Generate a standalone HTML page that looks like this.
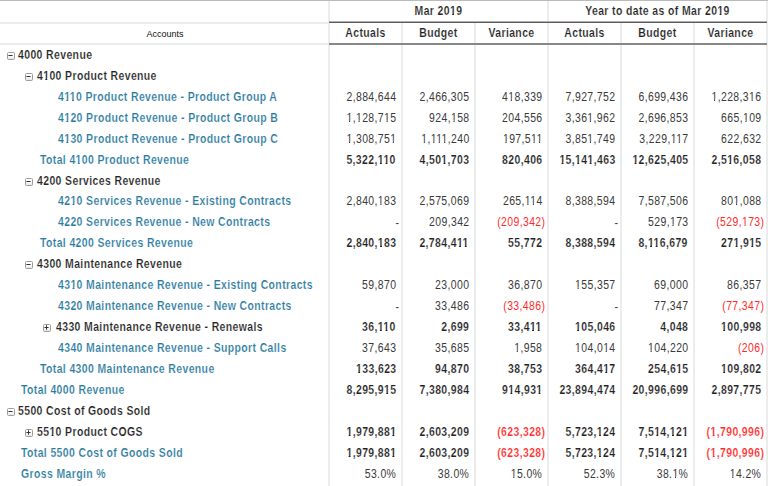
<!DOCTYPE html>
<html><head><meta charset="utf-8"><style>
html,body{margin:0;padding:0;background:#fff;width:768px;height:486px;overflow:hidden;position:relative;}
body{font-family:"Liberation Sans",sans-serif;font-size:12px;color:#222;}
.t{position:absolute;white-space:nowrap;line-height:21px;height:21px;font-size:12px;letter-spacing:0.45px;}
.a{transform:scaleX(0.87);transform-origin:0 0;}
.c{transform:scaleX(0.87);transform-origin:50% 0;text-align:center;}
.n{transform:scaleX(0.87);transform-origin:100% 0;text-align:right;}
.b{font-weight:bold;-webkit-text-stroke:0.18px #fff;}
.o{clip-path:polygon(0 0,100% 0,100% 9.6px,4.2px 9.6px,4.2px 100%,2.9px 100%,2.9px 9.6px,0 9.6px);}
.b .o{clip-path:polygon(0 0,100% 0,100% 9px,4.7px 9px,4.7px 100%,2.5px 100%,2.5px 9px,0 9px);}
.l{position:absolute;}
.ic{position:absolute;}
</style></head><body>

<svg width="0" height="0" style="position:absolute"><defs><linearGradient id="g" x1="0" y1="0" x2="0" y2="1"><stop offset="0" stop-color="#fff"/><stop offset="0.45" stop-color="#fff"/><stop offset="1" stop-color="#e2e2e2"/></linearGradient></defs></svg>
<div class="l" style="left:0;top:0;width:768px;height:1px;background:#bbbbbb"></div>
<div class="l" style="left:0;top:22px;width:328px;height:2px;background:#ebedec"></div>
<div class="l" style="left:0;top:43px;width:328px;height:2px;background:#ebedec"></div>
<div class="l" style="left:328px;top:1px;width:2px;height:485px;background:#ebedec"></div>
<div class="l" style="left:401px;top:23px;width:2px;height:463px;background:#ebedec"></div>
<div class="l" style="left:474px;top:23px;width:2px;height:463px;background:#ebedec"></div>
<div class="l" style="left:547px;top:1px;width:2px;height:485px;background:#ebedec"></div>
<div class="l" style="left:620px;top:23px;width:2px;height:463px;background:#ebedec"></div>
<div class="l" style="left:693px;top:23px;width:2px;height:463px;background:#ebedec"></div>
<div class="l" style="left:766px;top:1px;width:2px;height:485px;background:#ebedec"></div>
<div class="l" style="left:329px;top:21px;width:438px;height:1px;background:#b0b0b0"></div>
<div class="l" style="left:329px;top:22px;width:438px;height:1px;background:#5e5c5a"></div>
<div class="l" style="left:329px;top:43px;width:438px;height:2px;background:#898787"></div>
<div class="t c b" style="left:330px;top:1px;width:217px">Mar 20<span class="o">1</span>9</div>
<div class="t c b" style="left:549px;top:1px;width:217px">Year to date as of Mar 20<span class="o">1</span>9</div>
<div class="t" style="left:1px;top:24px;width:328px;font-size:9px;line-height:21px;text-align:center;letter-spacing:0;color:#111">Accounts</div>
<div class="t c b" style="left:330px;top:23px;width:71px">Actuals</div>
<div class="t c b" style="left:403px;top:23px;width:71px">Budget</div>
<div class="t c b" style="left:476px;top:23px;width:71px">Variance</div>
<div class="t c b" style="left:549px;top:23px;width:71px">Actuals</div>
<div class="t c b" style="left:622px;top:23px;width:71px">Budget</div>
<div class="t c b" style="left:695px;top:23px;width:71px">Variance</div>
<svg class="ic" style="left:7px;top:52px" width="8" height="8" viewBox="0 0 8 8"><rect x="0.5" y="0.5" width="7" height="7" rx="1" fill="url(#g)" stroke="#9c9c9c"/><path d="M1.4 3.5H5.6" stroke="#333" stroke-width="1"/></svg>
<div class="t a b" style="left:18px;top:45px;color:#222">4000 Revenue</div>
<svg class="ic" style="left:25px;top:73px" width="8" height="8" viewBox="0 0 8 8"><rect x="0.5" y="0.5" width="7" height="7" rx="1" fill="url(#g)" stroke="#9c9c9c"/><path d="M1.4 3.5H5.6" stroke="#333" stroke-width="1"/></svg>
<div class="t a b" style="left:37px;top:66px;color:#222">4<span class="o">1</span>00 Product Revenue</div>
<div class="t a b" style="left:58px;top:87px;color:#2a7a9e">4<span class="o">1</span><span class="o">1</span>0 Product Revenue - Product Group A</div>
<div class="t n" style="right:371.8px;top:87px;color:#3a3a3a">2,884,644</div>
<div class="t n" style="right:298.8px;top:87px;color:#3a3a3a">2,466,305</div>
<div class="t n" style="right:225.8px;top:87px;color:#3a3a3a">4<span class="o">1</span>8,339</div>
<div class="t n" style="right:152.8px;top:87px;color:#3a3a3a">7,927,752</div>
<div class="t n" style="right:79.8px;top:87px;color:#3a3a3a">6,699,436</div>
<div class="t n" style="right:6.8px;top:87px;color:#3a3a3a"><span class="o">1</span>,228,3<span class="o">1</span>6</div>
<div class="t a b" style="left:58px;top:108px;color:#2a7a9e">4<span class="o">1</span>20 Product Revenue - Product Group B</div>
<div class="t n" style="right:371.8px;top:108px;color:#3a3a3a"><span class="o">1</span>,<span class="o">1</span>28,7<span class="o">1</span>5</div>
<div class="t n" style="right:298.8px;top:108px;color:#3a3a3a">924,<span class="o">1</span>58</div>
<div class="t n" style="right:225.8px;top:108px;color:#3a3a3a">204,556</div>
<div class="t n" style="right:152.8px;top:108px;color:#3a3a3a">3,36<span class="o">1</span>,962</div>
<div class="t n" style="right:79.8px;top:108px;color:#3a3a3a">2,696,853</div>
<div class="t n" style="right:6.8px;top:108px;color:#3a3a3a">665,<span class="o">1</span>09</div>
<div class="t a b" style="left:58px;top:129px;color:#2a7a9e">4<span class="o">1</span>30 Product Revenue - Product Group C</div>
<div class="t n" style="right:371.8px;top:129px;color:#3a3a3a"><span class="o">1</span>,308,75<span class="o">1</span></div>
<div class="t n" style="right:298.8px;top:129px;color:#3a3a3a"><span class="o">1</span>,<span class="o">1</span><span class="o">1</span><span class="o">1</span>,240</div>
<div class="t n" style="right:225.8px;top:129px;color:#3a3a3a"><span class="o">1</span>97,5<span class="o">1</span><span class="o">1</span></div>
<div class="t n" style="right:152.8px;top:129px;color:#3a3a3a">3,85<span class="o">1</span>,749</div>
<div class="t n" style="right:79.8px;top:129px;color:#3a3a3a">3,229,<span class="o">1</span><span class="o">1</span>7</div>
<div class="t n" style="right:6.8px;top:129px;color:#3a3a3a">622,632</div>
<div class="t a b" style="left:40px;top:150px;color:#2a7a9e">Total 4<span class="o">1</span>00 Product Revenue</div>
<div class="t n b" style="right:371.8px;top:150px;color:#222">5,322,<span class="o">1</span><span class="o">1</span>0</div>
<div class="t n b" style="right:298.8px;top:150px;color:#222">4,50<span class="o">1</span>,703</div>
<div class="t n b" style="right:225.8px;top:150px;color:#222">820,406</div>
<div class="t n b" style="right:152.8px;top:150px;color:#222"><span class="o">1</span>5,<span class="o">1</span>4<span class="o">1</span>,463</div>
<div class="t n b" style="right:79.8px;top:150px;color:#222"><span class="o">1</span>2,625,405</div>
<div class="t n b" style="right:6.8px;top:150px;color:#222">2,5<span class="o">1</span>6,058</div>
<svg class="ic" style="left:25px;top:178px" width="8" height="8" viewBox="0 0 8 8"><rect x="0.5" y="0.5" width="7" height="7" rx="1" fill="url(#g)" stroke="#9c9c9c"/><path d="M1.4 3.5H5.6" stroke="#333" stroke-width="1"/></svg>
<div class="t a b" style="left:37px;top:171px;color:#222">4200 Services Revenue</div>
<div class="t a b" style="left:58px;top:191px;color:#2a7a9e">42<span class="o">1</span>0 Services Revenue - Existing Contracts</div>
<div class="t n" style="right:371.8px;top:191px;color:#3a3a3a">2,840,<span class="o">1</span>83</div>
<div class="t n" style="right:298.8px;top:191px;color:#3a3a3a">2,575,069</div>
<div class="t n" style="right:225.8px;top:191px;color:#3a3a3a">265,<span class="o">1</span><span class="o">1</span>4</div>
<div class="t n" style="right:152.8px;top:191px;color:#3a3a3a">8,388,594</div>
<div class="t n" style="right:79.8px;top:191px;color:#3a3a3a">7,587,506</div>
<div class="t n" style="right:6.8px;top:191px;color:#3a3a3a">80<span class="o">1</span>,088</div>
<div class="t a b" style="left:58px;top:212px;color:#2a7a9e">4220 Services Revenue - New Contracts</div>
<div class="t n" style="right:368.6px;top:213px;color:#3a3a3a">-</div>
<div class="t n" style="right:298.8px;top:212px;color:#3a3a3a">209,342</div>
<div class="t n" style="right:222.6px;top:212px;color:#ff2b2b">(209,342)</div>
<div class="t n" style="right:149.6px;top:213px;color:#3a3a3a">-</div>
<div class="t n" style="right:79.8px;top:212px;color:#3a3a3a">529,<span class="o">1</span>73</div>
<div class="t n" style="right:3.6px;top:212px;color:#ff2b2b">(529,<span class="o">1</span>73)</div>
<div class="t a b" style="left:40px;top:233px;color:#2a7a9e">Total 4200 Services Revenue</div>
<div class="t n b" style="right:371.8px;top:233px;color:#222">2,840,<span class="o">1</span>83</div>
<div class="t n b" style="right:298.8px;top:233px;color:#222">2,784,4<span class="o">1</span><span class="o">1</span></div>
<div class="t n b" style="right:225.8px;top:233px;color:#222">55,772</div>
<div class="t n b" style="right:152.8px;top:233px;color:#222">8,388,594</div>
<div class="t n b" style="right:79.8px;top:233px;color:#222">8,<span class="o">1</span><span class="o">1</span>6,679</div>
<div class="t n b" style="right:6.8px;top:233px;color:#222">27<span class="o">1</span>,9<span class="o">1</span>5</div>
<svg class="ic" style="left:25px;top:261px" width="8" height="8" viewBox="0 0 8 8"><rect x="0.5" y="0.5" width="7" height="7" rx="1" fill="url(#g)" stroke="#9c9c9c"/><path d="M1.4 3.5H5.6" stroke="#333" stroke-width="1"/></svg>
<div class="t a b" style="left:37px;top:254px;color:#222">4300 Maintenance Revenue</div>
<div class="t a b" style="left:58px;top:275px;color:#2a7a9e">43<span class="o">1</span>0 Maintenance Revenue - Existing Contracts</div>
<div class="t n" style="right:371.8px;top:275px;color:#3a3a3a">59,870</div>
<div class="t n" style="right:298.8px;top:275px;color:#3a3a3a">23,000</div>
<div class="t n" style="right:225.8px;top:275px;color:#3a3a3a">36,870</div>
<div class="t n" style="right:152.8px;top:275px;color:#3a3a3a"><span class="o">1</span>55,357</div>
<div class="t n" style="right:79.8px;top:275px;color:#3a3a3a">69,000</div>
<div class="t n" style="right:6.8px;top:275px;color:#3a3a3a">86,357</div>
<div class="t a b" style="left:58px;top:296px;color:#2a7a9e">4320 Maintenance Revenue - New Contracts</div>
<div class="t n" style="right:368.6px;top:297px;color:#3a3a3a">-</div>
<div class="t n" style="right:298.8px;top:296px;color:#3a3a3a">33,486</div>
<div class="t n" style="right:222.6px;top:296px;color:#ff2b2b">(33,486)</div>
<div class="t n" style="right:149.6px;top:297px;color:#3a3a3a">-</div>
<div class="t n" style="right:79.8px;top:296px;color:#3a3a3a">77,347</div>
<div class="t n" style="right:3.6px;top:296px;color:#ff2b2b">(77,347)</div>
<svg class="ic" style="left:43px;top:324px" width="8" height="8" viewBox="0 0 8 8"><rect x="0.5" y="0.5" width="7" height="7" rx="1" fill="url(#g)" stroke="#9c9c9c"/><path d="M1.4 3.5H5.6" stroke="#333" stroke-width="1"/><path d="M3.5 1.3V5.7" stroke="#333" stroke-width="1"/></svg>
<div class="t a b" style="left:56px;top:317px;color:#222">4330 Maintenance Revenue - Renewals</div>
<div class="t n b" style="right:371.8px;top:317px;color:#222">36,<span class="o">1</span><span class="o">1</span>0</div>
<div class="t n b" style="right:298.8px;top:317px;color:#222">2,699</div>
<div class="t n b" style="right:225.8px;top:317px;color:#222">33,4<span class="o">1</span><span class="o">1</span></div>
<div class="t n b" style="right:152.8px;top:317px;color:#222"><span class="o">1</span>05,046</div>
<div class="t n b" style="right:79.8px;top:317px;color:#222">4,048</div>
<div class="t n b" style="right:6.8px;top:317px;color:#222"><span class="o">1</span>00,998</div>
<div class="t a b" style="left:58px;top:338px;color:#2a7a9e">4340 Maintenance Revenue - Support Calls</div>
<div class="t n" style="right:371.8px;top:338px;color:#3a3a3a">37,643</div>
<div class="t n" style="right:298.8px;top:338px;color:#3a3a3a">35,685</div>
<div class="t n" style="right:225.8px;top:338px;color:#3a3a3a"><span class="o">1</span>,958</div>
<div class="t n" style="right:152.8px;top:338px;color:#3a3a3a"><span class="o">1</span>04,0<span class="o">1</span>4</div>
<div class="t n" style="right:79.8px;top:338px;color:#3a3a3a"><span class="o">1</span>04,220</div>
<div class="t n" style="right:3.6px;top:338px;color:#ff2b2b">(206)</div>
<div class="t a b" style="left:40px;top:359px;color:#2a7a9e">Total 4300 Maintenance Revenue</div>
<div class="t n b" style="right:371.8px;top:359px;color:#222"><span class="o">1</span>33,623</div>
<div class="t n b" style="right:298.8px;top:359px;color:#222">94,870</div>
<div class="t n b" style="right:225.8px;top:359px;color:#222">38,753</div>
<div class="t n b" style="right:152.8px;top:359px;color:#222">364,4<span class="o">1</span>7</div>
<div class="t n b" style="right:79.8px;top:359px;color:#222">254,6<span class="o">1</span>5</div>
<div class="t n b" style="right:6.8px;top:359px;color:#222"><span class="o">1</span>09,802</div>
<div class="t a b" style="left:21px;top:380px;color:#2a7a9e">Total 4000 Revenue</div>
<div class="t n b" style="right:371.8px;top:380px;color:#222">8,295,9<span class="o">1</span>5</div>
<div class="t n b" style="right:298.8px;top:380px;color:#222">7,380,984</div>
<div class="t n b" style="right:225.8px;top:380px;color:#222">9<span class="o">1</span>4,93<span class="o">1</span></div>
<div class="t n b" style="right:152.8px;top:380px;color:#222">23,894,474</div>
<div class="t n b" style="right:79.8px;top:380px;color:#222">20,996,699</div>
<div class="t n b" style="right:6.8px;top:380px;color:#222">2,897,775</div>
<svg class="ic" style="left:7px;top:408px" width="8" height="8" viewBox="0 0 8 8"><rect x="0.5" y="0.5" width="7" height="7" rx="1" fill="url(#g)" stroke="#9c9c9c"/><path d="M1.4 3.5H5.6" stroke="#333" stroke-width="1"/></svg>
<div class="t a b" style="left:18px;top:401px;color:#222">5500 Cost of Goods Sold</div>
<svg class="ic" style="left:25px;top:429px" width="8" height="8" viewBox="0 0 8 8"><rect x="0.5" y="0.5" width="7" height="7" rx="1" fill="url(#g)" stroke="#9c9c9c"/><path d="M1.4 3.5H5.6" stroke="#333" stroke-width="1"/><path d="M3.5 1.3V5.7" stroke="#333" stroke-width="1"/></svg>
<div class="t a b" style="left:37px;top:422px;color:#222">55<span class="o">1</span>0 Product COGS</div>
<div class="t n b" style="right:371.8px;top:422px;color:#222"><span class="o">1</span>,979,88<span class="o">1</span></div>
<div class="t n b" style="right:298.8px;top:422px;color:#222">2,603,209</div>
<div class="t n b" style="right:222.6px;top:422px;color:#ff2b2b">(623,328)</div>
<div class="t n b" style="right:152.8px;top:422px;color:#222">5,723,<span class="o">1</span>24</div>
<div class="t n b" style="right:79.8px;top:422px;color:#222">7,5<span class="o">1</span>4,<span class="o">1</span>2<span class="o">1</span></div>
<div class="t n b" style="right:3.6px;top:422px;color:#ff2b2b">(<span class="o">1</span>,790,996)</div>
<div class="t a b" style="left:21px;top:443px;color:#2a7a9e">Total 5500 Cost of Goods Sold</div>
<div class="t n b" style="right:371.8px;top:443px;color:#222"><span class="o">1</span>,979,88<span class="o">1</span></div>
<div class="t n b" style="right:298.8px;top:443px;color:#222">2,603,209</div>
<div class="t n b" style="right:222.6px;top:443px;color:#ff2b2b">(623,328)</div>
<div class="t n b" style="right:152.8px;top:443px;color:#222">5,723,<span class="o">1</span>24</div>
<div class="t n b" style="right:79.8px;top:443px;color:#222">7,5<span class="o">1</span>4,<span class="o">1</span>2<span class="o">1</span></div>
<div class="t n b" style="right:3.6px;top:443px;color:#ff2b2b">(<span class="o">1</span>,790,996)</div>
<div class="t a b" style="left:21px;top:464px;color:#2a7a9e">Gross Margin %</div>
<div class="t n" style="right:371.8px;top:464px;color:#3a3a3a">53.0%</div>
<div class="t n" style="right:298.8px;top:464px;color:#3a3a3a">38.0%</div>
<div class="t n" style="right:225.8px;top:464px;color:#3a3a3a"><span class="o">1</span>5.0%</div>
<div class="t n" style="right:152.8px;top:464px;color:#3a3a3a">52.3%</div>
<div class="t n" style="right:79.8px;top:464px;color:#3a3a3a">38.<span class="o">1</span>%</div>
<div class="t n" style="right:6.8px;top:464px;color:#3a3a3a"><span class="o">1</span>4.2%</div>
</body></html>
